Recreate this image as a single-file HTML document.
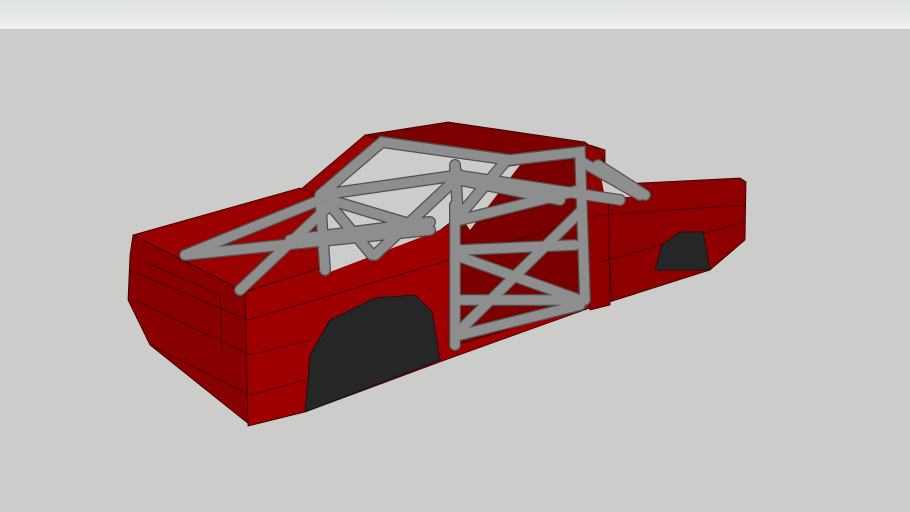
<!DOCTYPE html>
<html><head><style>
html,body{margin:0;padding:0;width:910px;height:512px;overflow:hidden;background:#cccccb;}
.top{position:absolute;left:0;top:0;width:910px;height:29px;background:linear-gradient(#dfe2e3,#eff0f0);border-bottom:1px solid #c4c6c6;}
svg{position:absolute;left:0;top:0;}
</style></head><body>
<div class="top"></div>
<svg width="910" height="512" viewBox="0 0 910 512">
<g stroke="#2a0000" stroke-width="0.8" stroke-linejoin="round">
<polygon points="600,185 740,178 746,182 745,240 710,270 600,305" fill="#8e0000"/>
<polygon points="365,135 448,122 585,142 595,150 510,158 380,142" fill="#7c0000"/>
<polygon points="365,135 382,140 322,196 300,190" fill="#9a0000"/>
<polygon points="133,235 300,188 322,196 330,272 245,292" fill="#9a0000"/>
<polygon points="133,235 245,292 250,425 150,345 128,300 130,255" fill="#880000"/>
<polygon points="245,292 440,230 465,212 500,160 590,145 605,150 605,188 612,300 445,360 305,412 248,426" fill="#9e0000"/>
<polygon points="580,148 598,148 608,170 610,305 590,310" fill="#900000"/>
</g>
<polygon points="323,196 382,142 505,158 462,212 440,230 330,272" fill="#cccccb"/>
<polygon points="598,160 645,196 605,198" fill="#cccccb"/>
<polygon points="458,210 505,162 580,150 585,300 575,308 458,345" fill="#7a0000" stroke="#2a0000" stroke-width="0.8"/>
<polygon points="460,215 500,168 520,165 470,230" fill="#cccccb"/>
<g stroke="#3a0000" stroke-width="0.8" fill="none">
<path d="M130,270 L248,320 L600,215 L745,205"/>
<path d="M135,300 L250,355 L310,340"/>
<path d="M150,345 L250,395 L305,380"/>
<path d="M600,262 L745,222"/>
<path d="M145,262 L220,295 L222,350"/>
</g>
<polygon points="305,412 310,355 330,320 375,298 415,295 432,312 440,360" fill="#262626" stroke="#111" stroke-width="0.8"/>
<polygon points="655,270 662,245 680,232 703,232 710,270" fill="#262626" stroke="#111" stroke-width="0.8"/>
<g stroke-linecap="round" fill="none">
<g stroke="#505050" stroke-width="12">
<path d="M320,195 L460,175 M320,195 L382,142 L510,160 M455,165 L458,215 M320,195 L325,270 M185,255 L320,200 M185,255 L430,230 M240,290 L330,205 M290,240 L430,222 M330,200 L430,230 M460,180 L560,200 M330,205 L372,255 M455,175 L620,200 M510,160 L580,152 L585,300 M460,220 L580,190 M455,255 L580,300 M455,335 L580,212 M460,300 L575,300 M460,335 L580,305 M582,162 L640,195 M598,165 L645,195 M455,205 L455,345 M505,162 L460,215 M460,250 L575,245 M375,255 L455,180"/>
</g>
<g stroke="#8e8e8e" stroke-width="9.5">
<path d="M320,195 L460,175 M320,195 L382,142 L510,160 M455,165 L458,215 M320,195 L325,270 M185,255 L320,200 M185,255 L430,230 M240,290 L330,205 M290,240 L430,222 M330,200 L430,230 M460,180 L560,200 M330,205 L372,255 M455,175 L620,200 M510,160 L580,152 L585,300 M460,220 L580,190 M455,255 L580,300 M455,335 L580,212 M460,300 L575,300 M460,335 L580,305 M582,162 L640,195 M598,165 L645,195 M455,205 L455,345 M505,162 L460,215 M460,250 L575,245 M375,255 L455,180"/>
</g>
</g>
</svg>
</body></html>
